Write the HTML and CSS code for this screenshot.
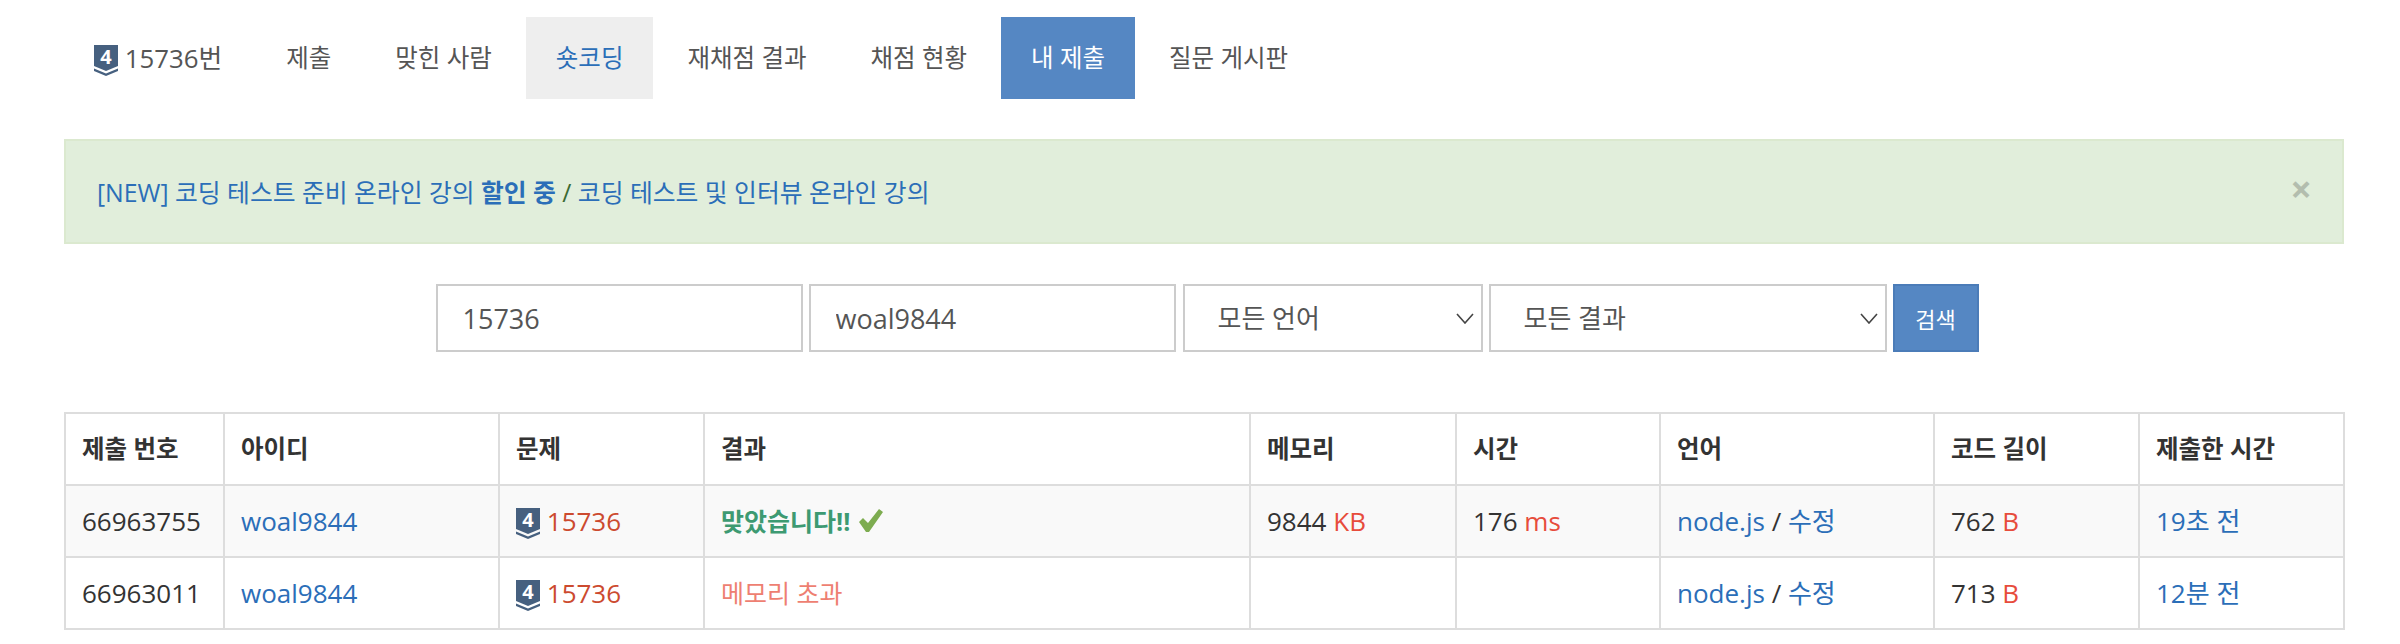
FILE: index.html
```html
<!DOCTYPE html>
<html lang="ko">

    <head>
        <meta charset="UTF-8">
        <title>채점 현황</title>
        <link rel="stylesheet" href="styles.css">
    </head>

    <body>
        <div class="page">
            <ul class="tabs">
                <li><a class="tab tab-problem" href="#">
                    <svg class="tier" viewBox="0 0 24 31"><path d="M0 0H24V21L12 26L0 21Z"/><path d="M0 23.5L12 28.5L24 23.5V26L12 31L0 26Z"/><text x="12" y="19">4</text></svg>
                    15736번</a></li>
                <li><a class="tab" href="#">제출</a></li>
                <li><a class="tab" href="#">맞힌 사람</a></li>
                <li><a class="tab tab-hover" href="#">숏코딩</a></li>
                <li><a class="tab" href="#">재채점 결과</a></li>
                <li><a class="tab" href="#">채점 현황</a></li>
                <li><a class="tab tab-active" href="#">내 제출</a></li>
                <li><a class="tab" href="#">질문 게시판</a></li>
            </ul>

            <div class="alert">
                <span><a href="#">[NEW] 코딩 테스트 준비 온라인 강의 <b>할인 중</b></a> / <a href="#">코딩 테스트 및 인터뷰 온라인 강의</a></span>
                <button class="close">×</button>
            </div>

            <form class="search">
                <input class="field" type="text" value="15736">
                <input class="field field-user" type="text" value="woal9844">
                <div class="select select-lang">
                    <select><option>모든 언어</option></select>
                    <svg viewBox="0 0 18 11"><path d="M1 1L9 10L17 1"/></svg>
                </div>
                <div class="select select-result">
                    <select><option>모든 결과</option></select>
                    <svg viewBox="0 0 18 11"><path d="M1 1L9 10L17 1"/></svg>
                </div>
                <button class="search-btn" type="button">검색</button>
            </form>

            <table class="status">
                <thead>
                    <tr>
                        <th class="c-id">제출 번호</th>
                        <th class="c-user">아이디</th>
                        <th class="c-problem">문제</th>
                        <th class="c-result">결과</th>
                        <th class="c-memory">메모리</th>
                        <th class="c-time">시간</th>
                        <th class="c-lang">언어</th>
                        <th class="c-len">코드 길이</th>
                        <th class="c-date">제출한 시간</th>
                    </tr>
                </thead>
                <tbody>
                    <tr class="striped">
                        <td>66963755</td>
                        <td><a href="#">woal9844</a></td>
                        <td><svg class="tier" viewBox="0 0 24 31"><path d="M0 0H24V21L12 26L0 21Z"/><path d="M0 23.5L12 28.5L24 23.5V26L12 31L0 26Z"/><text x="12" y="19">4</text></svg> <a class="problem" href="#">15736</a></td>
                        <td><span class="ac">맞았습니다!!</span> <svg class="check" viewBox="0 0 24 24"><path d="M0 13L4 9L9 14L20 0L24 3L10 23H7Z"/></svg></td>
                        <td>9844 <span class="unit">KB</span></td>
                        <td>176 <span class="unit">ms</span></td>
                        <td><a href="#">node.js</a> / <a href="#">수정</a></td>
                        <td>762 <span class="unit">B</span></td>
                        <td><a href="#">19초 전</a></td>
                    </tr>
                    <tr>
                        <td>66963011</td>
                        <td><a href="#">woal9844</a></td>
                        <td><svg class="tier" viewBox="0 0 24 31"><path d="M0 0H24V21L12 26L0 21Z"/><path d="M0 23.5L12 28.5L24 23.5V26L12 31L0 26Z"/><text x="12" y="19">4</text></svg> <a class="problem" href="#">15736</a></td>
                        <td><span class="mle">메모리 초과</span></td>
                        <td></td>
                        <td></td>
                        <td><a href="#">node.js</a> / <a href="#">수정</a></td>
                        <td>713 <span class="unit">B</span></td>
                        <td><a href="#">12분 전</a></td>
                    </tr>
                </tbody>
            </table>
        </div>
    </body>

</html>
```

FILE: styles.css
```css
body {
    margin: 0;
    background: #fff;
    color: #333;
    font-family: "Open Sans", "Noto Sans CJK KR", sans-serif;
    font-size: 25px;
}

a {
    color: #2b6eb8;
    text-decoration: none;
}

.page {
    width: 2280px;
    margin-left: 64px;
    padding-top: 17px;
}

.tier {
    width: 24px;
    height: 31px;
    overflow: visible;
    vertical-align: -8px;
    fill: #46607f;
}

.tier text {
    fill: #fff;
    font-family: "Open Sans", sans-serif;
    font-size: 20px;
    font-weight: 700;
    text-anchor: middle;
}

/* tabs */
.tabs {
    display: flex;
    gap: 4px;
    margin: 0;
    padding: 0;
    list-style: none;
}

.tab {
    display: block;
    padding: 24px 30px;
    height: 34px;
    font-size: 24.5px;
    line-height: 34px;
    color: #555;
}

.tab-problem {
    font-size: 25.8px;
}

.tab-hover {
    background: #eee;
    color: #2b6eb8;
}

.tab-active {
    background: #5587c3;
    color: #fff;
}

/* alert */
.alert {
    display: flex;
    justify-content: space-between;
    align-items: center;
    height: 99px;
    margin-top: 40px;
    padding: 0 30px 2px 31px;
    background: #e1eedb;
    border: 2px solid #dbe9cf;
    color: #3c6b34;
    font-size: 24.8px;
}

.close {
    padding: 0;
    margin-bottom: 6px;
    border: none;
    background: none;
    color: #000;
    opacity: 0.2;
    font-family: "Open Sans", sans-serif;
    font-size: 38px;
    font-weight: 700;
    line-height: 1;
}

/* search form */
.search {
    display: flex;
    justify-content: center;
    gap: 5px;
    height: 68px;
    margin-top: 40px;
    padding-left: 6px;
}

.field,
.select select {
    box-sizing: border-box;
    height: 68px;
    border: 2px solid #ccc;
    border-radius: 0;
    background: #fff;
    color: #555;
    font-family: inherit;
}

.field {
    width: 367px;
    padding: 0 25px;
    font-size: 27px;
}

.field-user {
    margin-left: 1px;
}

.select {
    position: relative;
}

.select select {
    width: 100%;
    padding: 0 33px;
    font-size: 26px;
    appearance: none;
}

.select svg {
    position: absolute;
    top: 29px;
    right: 9px;
    width: 18px;
    height: 11px;
    fill: none;
    stroke: #444;
    stroke-width: 1.6;
}

.select-lang {
    width: 300px;
    margin-left: 2px;
}

.select-result {
    width: 398px;
    margin-left: 1px;
}

.search-btn {
    width: 86px;
    height: 68px;
    margin-left: 1px;
    padding: 0;
    border: 2px solid #4b7cb8;
    background: #5587c3;
    color: #fff;
    font-family: inherit;
    font-size: 22px;
}

/* table */
.status {
    width: 2280px;
    margin-top: 60px;
    border-collapse: collapse;
    table-layout: fixed;
}

.status th,
.status td {
    height: 36px;
    padding: 17px 16px;
    border: 2px solid #ddd;
    line-height: 36px;
    text-align: left;
    white-space: nowrap;
}

.status th {
    font-size: 24.5px;
}

.status td {
    font-size: 26px;
}

.c-id { width: 125px; }
.c-user { width: 241px; }
.c-problem { width: 171px; }
.c-result { width: 512px; }
.c-memory { width: 172px; }
.c-time { width: 170px; }
.c-lang { width: 240px; }
.c-len { width: 171px; }
.c-date { width: 171px; }

.striped td {
    background: #f9f9f9;
}

.problem {
    color: #cc4a2f;
}

.unit {
    color: #e74c3c;
}

.ac {
    color: #3d9a72;
    font-size: 25px;
    font-weight: 700;
}

.mle {
    color: #ee7f72;
    font-size: 25px;
}

.check {
    width: 24px;
    height: 24px;
    margin-left: 2px;
    vertical-align: -2px;
    fill: #7dac50;
}
```
